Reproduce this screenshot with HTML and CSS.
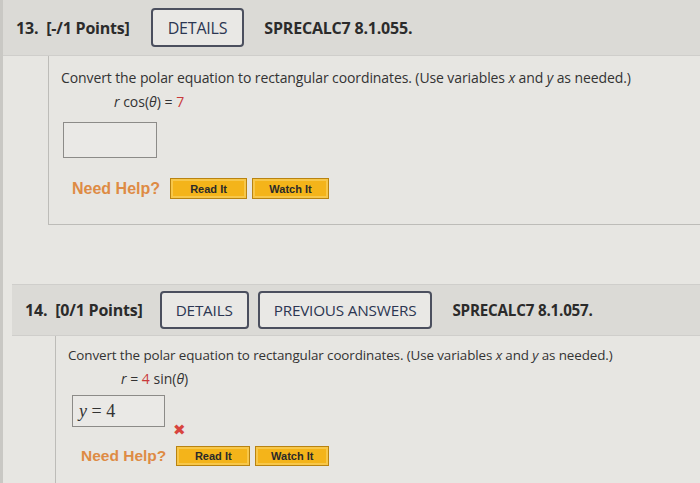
FILE: index.html
```html
<!DOCTYPE html>
<html>
<head>
  <title>SPRECALC7 Questions</title>
  <link rel="stylesheet" href="styles.css">
</head>
<body>
  <div class="page">
    <div class="question q13">
      <div class="q-header">
        <span class="q-title">13.&nbsp; [-/1 Points]</span>
        <button class="q-btn">DETAILS</button>
        <span class="q-code">SPRECALC7 8.1.055.</span>
      </div>
      <div class="q-body">
        <p class="prompt">Convert the polar equation to rectangular coordinates. (Use variables <i>x</i> and <i>y</i> as needed.)</p>
        <p class="equation"><i>r</i> cos(<i>&theta;</i>) = <span class="given">7</span></p>
        <div class="answer-row">
          <div class="answer-box"></div>
        </div>
        <div class="help-row">
          <span class="need-help">Need Help?</span>
          <button class="help-btn">Read It</button>
          <button class="help-btn">Watch It</button>
        </div>
      </div>
    </div>

    <div class="question q14">
      <div class="q-header">
        <span class="q-title">14.&nbsp; [0/1 Points]</span>
        <button class="q-btn">DETAILS</button>
        <button class="q-btn">PREVIOUS ANSWERS</button>
        <span class="q-code">SPRECALC7 8.1.057.</span>
      </div>
      <div class="q-body">
        <p class="prompt">Convert the polar equation to rectangular coordinates. (Use variables <i>x</i> and <i>y</i> as needed.)</p>
        <p class="equation"><i>r</i> = <span class="given">4</span> sin(<i>&theta;</i>)</p>
        <div class="answer-row">
          <div class="answer-box filled"><i>y</i> = 4</div>
          <span class="wrong">&#10006;</span>
        </div>
        <div class="help-row">
          <span class="need-help">Need Help?</span>
          <button class="help-btn">Read It</button>
          <button class="help-btn">Watch It</button>
        </div>
      </div>
    </div>
  </div>
</body>
</html>
```

FILE: styles.css
```css
:root {
  --page-bg: #e7e6e2;
  --header-bg: #dbdad6;
  --line: #bdbcb8;
  --text: #2b2b2b;
  --btn-text: #2c3652;
  --btn-border: #4b4f5e;
  --orange: #de8b44;
  --gold: #f4b41a;
  --gold-dark: #b98310;
  --red: #c9393a;
}

body {
  margin: 0;
  background-color: var(--page-bg);
  font-family: 'Open Sans', 'DejaVu Sans', sans-serif;
  color: var(--text);
}

.page {
  border-left: 3px solid #c9c8c4;
  min-height: 483px;
  box-sizing: border-box;
}

.question {
  display: flex;
  flex-direction: column;
}

.q14 {
  margin-top: 59px;
  margin-left: 9px;
}

.q-header {
  display: flex;
  align-items: center;
  gap: 20px;
  height: 55px;
  padding-left: 13px;
  background-color: var(--header-bg);
  border-bottom: 1px solid #cfcecb;
}

.q14 .q-header {
  height: 50px;
  gap: 9px;
  border-top: 1px solid #cfcecb;
}

.q-title,
.q-code {
  font-weight: 700;
  font-size: 16px;
  letter-spacing: -0.2px;
}

.q-title {
  margin-right: 1px;
}

.q14 .q-title {
  margin-right: 8px;
}

.q14 .q-code {
  margin-left: 11px;
  font-size: 15.2px;
}

.q-btn {
  height: 39px;
  padding: 0 15px;
  border: 2px solid var(--btn-border);
  border-radius: 4px;
  background-color: #e9e8e5;
  color: var(--btn-text);
  font-family: 'Open Sans', sans-serif;
  font-size: 16px;
  letter-spacing: -0.2px;
}

.q14 .q-btn {
  height: 38px;
  padding: 0 14px;
  font-size: 15.3px;
}

.q-body {
  margin-left: 45px;
  padding: 11px 12px 0;
  border-left: 1px solid var(--line);
  border-bottom: 1px solid var(--line);
  height: 157px;
}

.q14 .q-body {
  margin-left: 43px;
  padding-top: 8px;
  border-bottom: none;
  height: 140px;
}

.prompt {
  margin: 0;
  font-size: 14px;
  line-height: 22px;
  letter-spacing: -0.1px;
  color: #333;
}

.q14 .prompt {
  font-size: 13.4px;
}

.equation {
  margin: 2px 0 0 53px;
  font-size: 14px;
  line-height: 22px;
  color: #333;
}

.given {
  color: var(--red);
}

.answer-row {
  display: flex;
  align-items: flex-end;
  gap: 8px;
  margin-top: 9px;
  margin-left: 2px;
}

.q14 .answer-row {
  margin-top: 5px;
  margin-left: 4px;
}

.answer-box {
  width: 92px;
  height: 34px;
  border: 1px solid #8c8b88;
  background-color: #eae9e6;
}

.answer-box.filled {
  width: 85px;
  height: 30px;
  padding-left: 6px;
  box-sizing: content-box;
  font-family: 'Liberation Serif', 'DejaVu Serif', serif;
  font-size: 18px;
  line-height: 30px;
  color: #333;
}

.wrong {
  color: #d8443f;
  font-family: 'DejaVu Sans', sans-serif;
  font-size: 15px;
  line-height: 15px;
  margin-bottom: -11px;
}

.help-row {
  display: flex;
  align-items: center;
  gap: 5px;
  margin-top: 20px;
  margin-left: 11px;
}

.q14 .help-row {
  margin-top: 19px;
  margin-left: 13px;
}

.need-help {
  font-family: 'Liberation Sans', Arial, sans-serif;
  font-weight: 700;
  font-size: 16px;
  color: var(--orange);
  margin-right: 5px;
}

.q14 .need-help {
  font-size: 15.5px;
}

.help-btn {
  width: 77px;
  height: 21px;
  padding: 0;
  border: 1px solid var(--gold-dark);
  box-shadow: inset 0 0 0 2px #f7c74a;
  background-color: var(--gold);
  color: #2a2a2a;
  font-family: 'Liberation Sans', Arial, sans-serif;
  font-weight: 700;
  font-size: 11px;
}

.q14 .help-btn {
  width: 74px;
  height: 20px;
}
```
